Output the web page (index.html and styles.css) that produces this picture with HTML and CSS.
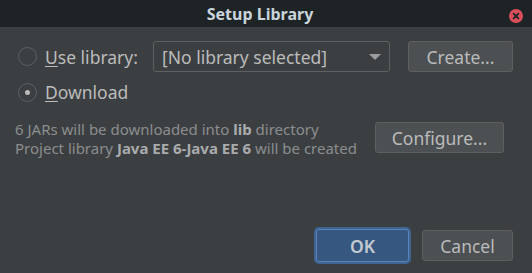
FILE: index.html
```html
<!DOCTYPE html>
<html lang="en">
<head>
  <meta charset="UTF-8" />
  <title>Setup Library</title>
  <link rel="stylesheet" href="styles.css">
</head>
<body>
  <div class="titlebar">
    <div class="title">Setup Library</div>
    <div class="close">
      <svg width="14" height="14" viewBox="0 0 14 14"><circle cx="7" cy="7" r="7" fill="#d9505a"/><path d="M4.6 4.6 L9.4 9.4 M9.4 4.6 L4.6 9.4" stroke="#1e2326" stroke-width="1.8" stroke-linecap="round"/></svg>
    </div>
  </div>
  <div class="dialog">
    <div class="row row-use">
      <span class="radio"></span>
      <span class="label"><u>U</u>se library:</span>
      <div class="combo">
        <span>[No library selected]</span>
        <span class="arrow"></span>
      </div>
      <button class="btn btn-create">Create...</button>
    </div>
    <div class="row row-download">
      <span class="radio checked"></span>
      <span class="label"><u>D</u>ownload</span>
    </div>
    <div class="info-row">
      <div class="info">
        <div>6 JARs will be downloaded into <b>lib</b> directory</div>
        <div>Project library <b>Java EE 6-Java EE 6</b> will be created</div>
      </div>
      <button class="btn btn-configure">Configure...</button>
    </div>
    <div class="footer">
      <button class="btn btn-ok">OK</button>
      <button class="btn btn-cancel">Cancel</button>
    </div>
  </div>
</body>
</html>
```

FILE: styles.css
```css
html, body {
  margin: 0;
  height: 100%;
}
body {
  font-family: "Noto Sans", "Open Sans", sans-serif;
  background-color: #3c3f41;
  color: #bbbbbb;
  display: flex;
  flex-direction: column;
}
.titlebar {
  height: 27px;
  background-color: #1e2326;
  display: flex;
  align-items: center;
  justify-content: center;
  position: relative;
  flex: none;
}
.title {
  font-size: 16px;
  font-weight: bold;
  color: #c9d4dc;
  margin-left: -12px;
}
.close {
  position: absolute;
  right: 9px;
  top: 6px;
  width: 14px;
  height: 14px;
}
.dialog {
  flex: 1;
  display: flex;
  flex-direction: column;
  padding: 14px 19px 11px 18px;
}
.row {
  display: flex;
  align-items: center;
}
.row-use {
  height: 31px;
}
.row-download {
  height: 24px;
  margin-top: 8px;
}
.radio {
  width: 17px;
  height: 17px;
  border: 1px solid #5d6062;
  border-radius: 50%;
  background-color: #3c3f41;
  flex: none;
  position: relative;
}
.radio.checked::after {
  content: "";
  position: absolute;
  left: 6px;
  top: 6px;
  width: 5px;
  height: 5px;
  border-radius: 50%;
  background-color: #bbbbbb;
}
.label {
  font-size: 17.5px;
  margin-left: 8px;
  color: #bbbbbb;
}
.label u {
  text-decoration-thickness: 1px;
  text-underline-offset: 2px;
}
.combo {
  margin-left: 15px;
  width: 237px;
  height: 31px;
  box-sizing: border-box;
  border: 1px solid #5e6162;
  border-radius: 3px;
  display: flex;
  align-items: center;
  justify-content: space-between;
  padding: 0 8px 0 8px;
  font-size: 17.5px;
  color: #bbbbbb;
}
.arrow {
  width: 0;
  height: 0;
  border-left: 6px solid transparent;
  border-right: 6px solid transparent;
  border-top: 6px solid #9a9c9e;
  margin-top: 1px;
}
.btn {
  font-family: "Noto Sans", "Open Sans", sans-serif;
  font-size: 17.5px;
  color: #bbbbbb;
  background-color: #4c5052;
  border: 1px solid #5e6060;
  border-radius: 3px;
  height: 31px;
  padding: 0;
  box-sizing: border-box;
}
.btn-create {
  margin-left: auto;
  width: 105px;
}
.info-row {
  display: flex;
  align-items: flex-start;
  margin-top: 18px;
}
.info {
  margin-left: -3px;
  margin-top: -2px;
  font-size: 15px;
  line-height: 19px;
  color: #8b8d8f;
}
.info b {
  color: #a9abad;
}
.btn-configure {
  margin-left: auto;
  margin-right: 9px;
  width: 129px;
}
.footer {
  margin-top: auto;
  display: flex;
  justify-content: flex-end;
  align-items: center;
  gap: 13px;
}
.btn-ok {
  width: 93px;
  height: 33px;
  background-color: #365880;
  border: 1px solid #5a82b5;
  box-shadow: 0 0 0 2px #3e6595;
  color: #c4cad0;
  font-weight: 600;
}
.btn-cancel {
  width: 91px;
}
```
